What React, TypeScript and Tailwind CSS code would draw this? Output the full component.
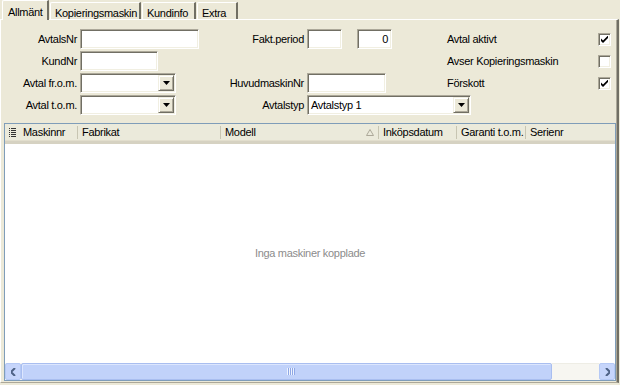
import React from 'react'

const sunken =
  'border border-t-[#ACA899] border-l-[#ACA899] border-b-white border-r-white shadow-[inset_1px_1px_0_#716F64,inset_-1px_-1px_0_#F1EFE2]'
const raised =
  'border border-t-[#F1EFE2] border-l-[#F1EFE2] border-b-[#716F64] border-r-[#716F64] shadow-[inset_1px_1px_0_#ffffff,inset_-1px_-1px_0_#ACA899]'

function TextBox({ width, value, right }: { width: number; value?: string; right?: boolean }) {
  return (
    <div
      className={`h-[20px] bg-white ${sunken} flex items-center px-[3px] ${right ? 'justify-end' : ''}`}
      style={{ width }}
    >
      {value}
    </div>
  )
}

function ComboBox({ width, value }: { width: number; value?: string }) {
  return (
    <div className={`h-[20px] bg-white ${sunken} flex items-center p-[1px]`} style={{ width }}>
      <span className="flex-1 pl-[2px] truncate">{value}</span>
      <div className={`w-[16px] h-[16px] bg-[#ECE9D8] ${raised} flex items-center justify-center`}>
        <svg width="7" height="4" viewBox="0 0 7 4">
          <path d="M0 0h7L3.5 4z" fill="#000" />
        </svg>
      </div>
    </div>
  )
}

function CheckBox({ checked }: { checked?: boolean }) {
  return (
    <div className={`w-[13px] h-[13px] bg-white ${sunken} flex items-center justify-center`}>
      {checked && (
        <svg width="7" height="7" viewBox="0 0 7 7">
          <path d="M0 2.5l2 2 5-5v2.5L2 7 0 5z" fill="#000" />
        </svg>
      )}
    </div>
  )
}

function Label({ children }: { children: React.ReactNode }) {
  return <div className="flex items-center justify-end pr-[3px] whitespace-nowrap">{children}</div>
}

const tabs = [
  { label: 'Allmänt', width: 47, active: true },
  { label: 'Kopieringsmaskin', width: 91 },
  { label: 'Kundinfo', width: 54 },
  { label: 'Extra', width: 41 },
]

const columns = [
  { label: 'Maskinnr', width: 73, icon: true },
  { label: 'Fabrikat', width: 143 },
  { label: 'Modell', width: 158, sorted: true },
  { label: 'Inköpsdatum', width: 78 },
  { label: 'Garanti t.o.m.', width: 69 },
  { label: 'Serienr', width: 88, last: true },
]

function ListIcon() {
  return (
    <svg width="7" height="9" viewBox="0 0 7 9" className="mr-[7px] shrink-0">
      {[0, 2, 4, 6, 8].map((y) => (
        <g key={y}>
          <rect x="0" y={y} width="1" height="1" fill="#333" />
          <rect x="2" y={y} width="5" height="1" fill="#333" />
        </g>
      ))}
    </svg>
  )
}

export default function App() {
  return (
    <div className="w-[620px] h-[385px] bg-[#ECE9D8] font-['Liberation_Sans',Arial,sans-serif] text-[11px] tracking-[-0.3px] text-black flex flex-col overflow-hidden">
      <div className="h-[19px] flex items-end pl-[2px]">
        {tabs.map((t) =>
          t.active ? (
            <div
              key={t.label}
              className="relative z-10 h-[20px] -mb-px bg-[#ECE9D8] border-t border-l border-white border-r-2 border-r-[#716F64] rounded-tl-[2px] flex items-start pt-[3px] pl-[5px] whitespace-nowrap"
              style={{ width: t.width }}
            >
              {t.label}
            </div>
          ) : (
            <div
              key={t.label}
              className="h-[17px] ml-[1px] border-t border-l border-white border-r-2 border-r-[#716F64] rounded-tl-[2px] flex items-start pt-[2px] pl-[4px] whitespace-nowrap"
              style={{ width: t.width }}
            >
              {t.label}
            </div>
          ),
        )}
      </div>

      <div className="w-[619px] h-[364px] border-t border-l border-white border-r-2 border-r-[#716F64] border-b border-b-[#ACA899] shadow-[inset_-1px_0_0_#ACA899] flex flex-col pt-[9px]">
        <div className="grid grid-cols-[79px_143px_84px_140px_151px_13px] grid-rows-[20px_20px_20px_20px] gap-y-[2px]">
          <Label>AvtalsNr</Label>
          <div><TextBox width={119} /></div>
          <Label>Fakt.period</Label>
          <div className="flex gap-[15px]">
            <TextBox width={35} />
            <TextBox width={35} value="0" right />
          </div>
          <div className="flex items-center">Avtal aktivt</div>
          <div className="flex items-center"><CheckBox checked /></div>

          <Label>KundNr</Label>
          <div><TextBox width={78} /></div>
          <div />
          <div />
          <div className="flex items-center">Avser Kopieringsmaskin</div>
          <div className="flex items-center"><CheckBox /></div>

          <Label>Avtal fr.o.m.</Label>
          <div><ComboBox width={96} /></div>
          <Label>HuvudmaskinNr</Label>
          <div><TextBox width={79} /></div>
          <div className="flex items-center">Förskott</div>
          <div className="flex items-center"><CheckBox checked /></div>

          <Label>Avtal t.o.m.</Label>
          <div><ComboBox width={96} /></div>
          <Label>Avtalstyp</Label>
          <div className="col-span-3"><ComboBox width={164} value="Avtalstyp 1" /></div>
        </div>

        <div className="mt-[8px] ml-[3px] mr-[1px] mb-[1px] flex-1 border border-[#7F9DB9] bg-white flex flex-col">
          <div className="h-[20px] bg-[#EBEADB] border-b-[3px] border-b-[#D6D2C2] shadow-[inset_0_-1px_0_#E2DECD] flex">
            {columns.map((c) => (
              <div key={c.label} className="flex items-center h-[17px]" style={{ width: c.width }}>
                <div className="flex-1 flex items-center pl-[4px] whitespace-nowrap overflow-hidden">
                  {c.icon && <ListIcon />}
                  <span className="flex-1">{c.label}</span>
                  {c.sorted && (
                    <svg width="8" height="7" viewBox="0 0 8 7" className="mr-[4px]">
                      <path d="M4 0.5L7.5 6.5H0.5z" fill="none" stroke="#ACA899" />
                    </svg>
                  )}
                </div>
                {!c.last && <div className="w-px h-[13px] bg-[#C7C5B2]" />}
              </div>
            ))}
          </div>

          <div className="flex-1 flex items-center justify-center text-[#8C8C8C]">Inga maskiner kopplade</div>

          <div className="h-[17px] flex bg-[#F7F6F1]">
            <div className="w-[16px] h-[17px] rounded-[2px] border border-[#B5C9F5] bg-[#C6D5FB] flex items-center justify-center">
              <svg width="5" height="8" viewBox="0 0 5 8">
                <path d="M4 0L0 4l4 4" fill="none" stroke="#4D6185" strokeWidth="2" />
              </svg>
            </div>
            <div className="w-[531px] h-[17px] rounded-[2px] border border-[#A9BEF0] bg-[#C1D2FA] shadow-[inset_1px_1px_0_#DCE6FE] flex items-center justify-center">
              <div className="flex gap-[1px] ml-[8px]">
                {[0, 1, 2, 3].map((i) => (
                  <div key={i} className="w-px h-[7px] bg-[#EEF3FE] shadow-[1px_0_0_#8FA8E6]" />
                ))}
              </div>
            </div>
            <div className="flex-1 border-t border-[#EEEDE5]" />
            <div className="w-[16px] h-[17px] rounded-[2px] border border-[#B5C9F5] bg-[#C6D5FB] flex items-center justify-center">
              <svg width="5" height="8" viewBox="0 0 5 8">
                <path d="M1 0l4 4-4 4" fill="none" stroke="#4D6185" strokeWidth="2" />
              </svg>
            </div>
          </div>
        </div>
      </div>
    </div>
  )
}
